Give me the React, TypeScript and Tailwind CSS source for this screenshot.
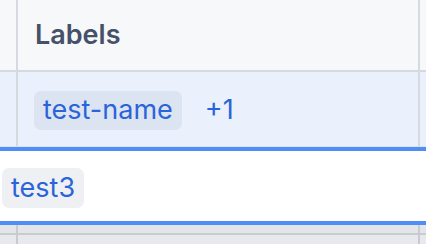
export default function App() {
  return (
    <div className="relative w-[426px] h-[244px] overflow-hidden bg-white font-['Inter',sans-serif]">
      {/* header */}
      <div className="flex h-[72px] bg-[#f7f8fa] border-b-2 border-[#d5d9e0]">
        <div className="w-[18px] shrink-0 border-r-2 border-[#d5d9e0]" />
        <div className="w-[402px] shrink-0 border-r-2 border-[#d5d9e0] flex items-center pl-[17px] pb-[2px]">
          <span className="text-[27px] font-semibold text-[#465068] leading-none">Labels</span>
        </div>
        <div className="flex-1" />
      </div>

      {/* selected row */}
      <div className="flex h-[76px] bg-[#eaf1fc] border-b-2 border-[#dde4ef]">
        <div className="w-[18px] shrink-0 border-r-2 border-[#d5d9e0]" />
        <div className="w-[402px] shrink-0 border-r-2 border-[#d5d9e0] flex items-center gap-[23px] pl-[16px] pt-[2px]">
          <span className="h-[39px] px-[9px] flex items-center rounded-[7px] bg-[#dce4f2] text-[27px] text-[#2a64d8]">
            test-name
          </span>
          <span className="text-[27px] text-[#2a64d8]">+1</span>
        </div>
        <div className="flex-1" />
      </div>

      {/* rows under the editor */}
      <div className="flex h-[87px] bg-[#e4e5e8] border-b-2 border-[#c8ccd2]">
        <div className="w-[18px] shrink-0 border-r-2 border-[#c8ccd2]" />
        <div className="w-[402px] shrink-0 border-r-2 border-[#c8ccd2]" />
        <div className="flex-1" />
      </div>
      <div className="flex h-[40px] bg-[#e8e9ec]">
        <div className="w-[18px] shrink-0 border-r-2 border-[#c8ccd2]" />
        <div className="w-[402px] shrink-0 border-r-2 border-[#c8ccd2]" />
        <div className="flex-1" />
      </div>

      {/* inline editor popover */}
      <div className="absolute left-[-4px] right-[-4px] top-[147px] h-[78px] bg-white border-y-4 border-[#4f8ef7] flex items-start pt-[17px] pl-[6px]">
        <span className="h-[40px] px-[9px] flex items-center rounded-[7px] bg-[#eef0f3] text-[27px] text-[#2a64d8]">
          test3
        </span>
      </div>
    </div>
  );
}
